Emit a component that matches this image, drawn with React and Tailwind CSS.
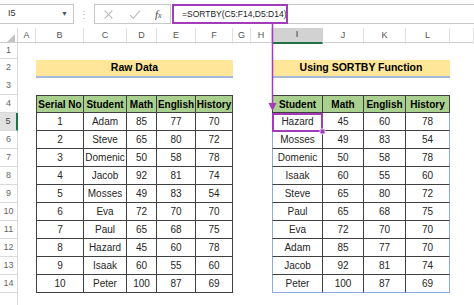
import React from 'react';

const COLS = 'grid grid-cols-[18px_18px_48px_43px_30px_39px_37px_18px_21px_51px_41px_42px_44px_24px]';

const raw = [
  [1, 'Adam', 85, 77, 70],
  [2, 'Steve', 65, 80, 72],
  [3, 'Domenic', 50, 58, 78],
  [4, 'Jacob', 92, 81, 74],
  [5, 'Mosses', 49, 83, 54],
  [6, 'Eva', 72, 70, 70],
  [7, 'Paul', 65, 68, 75],
  [8, 'Hazard', 45, 60, 78],
  [9, 'Isaak', 60, 55, 60],
  [10, 'Peter', 100, 87, 69],
];

// sorted by Math (SORTBY result)
const sorted = [...raw].sort((a, b) => a[2] - b[2]).map((r) => r.slice(1));

const letters = ['A', 'B', 'C', 'D', 'E', 'F', 'G', 'H', 'I', 'J', 'K', 'L', ''];

const RowHead = ({ n, active }) => (
  <div
    className={
      active
        ? 'flex items-center justify-center border-b border-b-[#d9d9d9] border-r-2 border-r-[#217346] bg-[#e1e1e1] text-[9px] text-[#444]'
        : 'flex items-center justify-center border-b border-r border-[#dadada] bg-white text-[9px] text-[#666]'
    }
  >
    {n}
  </div>
);

const Blank = () => <div />;

const LCell = ({ children, first, head }) => (
  <div
    className={
      'flex items-center justify-center border-r border-b border-[#404040] text-[10px] text-[#262626] ' +
      (first ? 'border-l ' : '') +
      (head ? 'border-t bg-[#a9d08e] font-bold text-black' : 'bg-white')
    }
  >
    {children}
  </div>
);

const RCell = ({ children, first, last, bottom, head }) => {
  let cls = 'flex items-center justify-center border-r border-b border-[#404040] text-[10px] text-[#262626] ';
  if (head) cls += 'border-t bg-[#a9d08e] font-bold text-black ';
  else cls += 'bg-white ';
  if (first) cls += head ? 'border-l ' : 'border-l border-l-[#8eaadb] ';
  if (last && !head) cls += 'border-r-[#8eaadb] ';
  if (bottom) cls += 'border-b-[#8eaadb] ';
  return <div className={cls}>{children}</div>;
};

export default function App() {
  const headL = ['Serial No', 'Student', 'Math', 'English', 'History'];
  const headR = ['Student', 'Math', 'English', 'History'];

  return (
    <div className="relative h-[305px] w-[474px] overflow-hidden bg-white font-['Liberation_Sans',Arial,sans-serif]">
      {/* formula bar */}
      <div className="flex h-[28px] items-start pt-[4px]">
        <div className="flex h-[20px] w-[74px] items-center justify-between border border-l-0 border-[#c8c8c8] pl-[8px] pr-[5px] text-[9px] text-[#333]">
          <span>I5</span>
          <span className="text-[7px] text-[#555]">▼</span>
        </div>
        <div className="flex h-[20px] w-[20px] items-center justify-center text-[10px] text-[#b5b5b5]">⋮</div>
        <div className="flex h-[20px] w-[77px] items-center border border-[#c8c8c8] pl-[8px]">
          <svg width="11" height="11" viewBox="0 0 10 10" className="mr-[15px]">
            <path d="M1.5 1.5L8.5 8.5M8.5 1.5L1.5 8.5" stroke="#b8b8b8" strokeWidth="1" />
          </svg>
          <svg width="12" height="11" viewBox="0 0 11 10" className="mr-[14px]">
            <path d="M1 5.5L4 8.5L10 1.5" stroke="#b8b8b8" strokeWidth="1" fill="none" />
          </svg>
          <span className="font-['Liberation_Serif',serif] text-[11px] italic text-[#444]">
            f<span className="text-[8px]">x</span>
          </span>
        </div>
        <div className="ml-[1px] flex h-[20px] flex-1 items-center border-y border-l border-[#c8c8c8] pl-[9px] text-[8.5px] text-[#222]">
          =SORTBY(C5:F14,D5:D14)
        </div>
      </div>

      {/* column headers */}
      <div className={COLS + ' h-[15px] border-b border-[#cfcfcf]'}>
        <div className="relative border-r border-[#dadada]">
          <svg width="8" height="8" viewBox="0 0 8 8" className="absolute bottom-[2px] right-[2px]">
            <polygon points="8,0 8,8 0,8" fill="#c4c4c4" />
          </svg>
        </div>
        {letters.map((l, i) =>
          l === 'I' ? (
            <div key={i} className="flex items-center justify-center border-b-2 border-r border-b-[#217346] border-r-[#cfcfcf] bg-[#d2d2d2] text-[9px] text-[#333]">
              {l}
            </div>
          ) : (
            <div key={i} className="flex items-center justify-center border-r border-[#e0e0e0] text-[9px] text-[#555]">
              {l}
            </div>
          )
        )}
      </div>

      {/* row 1 */}
      <div className={COLS + ' h-[16px]'}>
        <RowHead n={1} />
      </div>

      {/* row 2: titles */}
      <div className={COLS + ' h-[18px]'}>
        <RowHead n={2} />
        <Blank />
        <div className="col-span-5 mt-[1px] flex items-center justify-center border-b-2 border-[#a7b9da] bg-[#ffe699] text-[10.5px] font-bold text-black">
          Raw Data
        </div>
        <Blank />
        <Blank />
        <div className="col-span-4 mt-[1px] flex items-center justify-center border-b-2 border-[#a7b9da] bg-[#ffe699] text-[10.5px] font-bold text-black">
          Using SORTBY Function
        </div>
        <Blank />
      </div>

      {/* row 3 */}
      <div className={COLS + ' h-[18px]'}>
        <RowHead n={3} />
      </div>

      {/* row 4: headers */}
      <div className={COLS + ' h-[18px]'}>
        <RowHead n={4} />
        <Blank />
        {headL.map((h, i) => (
          <LCell key={h} head first={i === 0}>
            {h}
          </LCell>
        ))}
        <Blank />
        <Blank />
        {headR.map((h, i) => (
          <RCell key={h} head first={i === 0}>
            {h}
          </RCell>
        ))}
        <Blank />
      </div>

      {/* rows 5-14 */}
      {raw.map((row, r) => (
        <div key={r} className={COLS + ' h-[18px]'}>
          <RowHead n={r + 5} active={r === 0} />
          <Blank />
          {row.map((v, i) => (
            <LCell key={i} first={i === 0}>
              {v}
            </LCell>
          ))}
          <Blank />
          <Blank />
          {sorted[r].map((v, i) => (
            <RCell key={i} first={i === 0} last={i === 3} bottom={r === 9}>
              {v}
            </RCell>
          ))}
          <Blank />
        </div>
      ))}

      {/* row 15 */}
      <div className={COLS + ' h-[14px]'}>
        <div className="border-r border-[#dadada]" />
      </div>

      {/* annotation overlay */}
      <svg className="pointer-events-none absolute left-0 top-0" width="474" height="305" viewBox="0 0 474 305">
        <rect x="173" y="5" width="114" height="18" fill="none" stroke="#a23cb8" strokeWidth="2" />
        <line x1="272.5" y1="24" x2="272.5" y2="105" stroke="#a23cb8" strokeWidth="1.5" />
        <polygon points="268.5,103 276.5,103 272.5,111" fill="#a23cb8" />
        <rect x="273" y="114" width="49" height="17" fill="none" stroke="#a23cb8" strokeWidth="2" />
        <rect x="320" y="129" width="5" height="5" fill="#a23cb8" stroke="#fff" strokeWidth="0.8" />
      </svg>
    </div>
  );
}
